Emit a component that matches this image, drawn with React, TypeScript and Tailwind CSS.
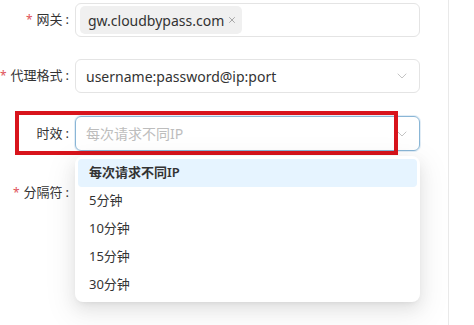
import { ChevronDown, X } from 'lucide-react';

const font = { fontFamily: '"Noto Sans", "Noto Sans CJK SC", sans-serif' };

function Label({ text, required }: { text: string; required?: boolean }) {
  return (
    <div className="flex w-[75px] shrink-0 items-center justify-end whitespace-nowrap pr-[6px] text-[13px] text-[#333]">
      {required && <span className="mr-[4px] text-[12px] text-[#e0525a]">*</span>}
      <span>{text}</span>
      <span className="ml-[3px]">:</span>
    </div>
  );
}

function Arrow() {
  return <ChevronDown className="h-[16px] w-[16px] text-[#c4c4c4]" strokeWidth={1.5} />;
}

const options = ['每次请求不同IP', '5分钟', '10分钟', '15分钟', '30分钟'];

export default function App() {
  return (
    <div className="flex h-[325px] w-[474px] overflow-hidden bg-white" style={font}>
      <div className="relative w-[449px] shrink-0 border-r border-[#e9e9e9] pt-[3px]">
        <div className="flex h-[34px] items-center">
          <Label text="网关" required />
          <div className="flex h-[34px] w-[345px] items-center rounded-[6px] border border-[#e4e4e4] px-[4px]">
            <span className="flex h-[28px] items-center gap-[3px] rounded-[5px] bg-[#f0f0f0] pl-[8px] pr-[5px] text-[14px] text-[#333]">
              gw.cloudbypass.com
              <X className="h-[10px] w-[10px] text-[#999]" strokeWidth={2} />
            </span>
          </div>
        </div>

        <div className="mt-[22px] flex h-[34px] items-center">
          <Label text="代理格式" required />
          <div className="flex h-[34px] w-[345px] items-center justify-between rounded-[6px] border border-[#e4e4e4] pl-[10px] pr-[9px] text-[14px] text-[#333]">
            <span>username:password@ip:port</span>
            <Arrow />
          </div>
        </div>

        <div className="mt-[23px] flex h-[35px] items-center">
          <Label text="时效" />
          <div className="flex h-[35px] w-[345px] items-center justify-between rounded-[6px] border border-[#8ab6d6] pl-[10px] pr-[9px] text-[14px] text-[#bdbdbd] shadow-[0_0_0_1px_rgba(140,185,220,0.25)]">
            <span>每次请求不同IP</span>
            <Arrow />
          </div>
        </div>

        <div className="mt-[25px] flex h-[34px] items-center">
          <Label text="分隔符" required />
        </div>

        <div className="pointer-events-none absolute left-[15px] top-[111px] h-[44px] w-[383px] border-[4px] border-[#d8141c]" />

        <div className="absolute left-[75px] top-[156px] w-[345px] rounded-[8px] bg-white p-[3px] shadow-[0_6px_16px_rgba(0,0,0,0.08),0_3px_6px_-4px_rgba(0,0,0,0.12),0_9px_28px_8px_rgba(0,0,0,0.05)]">
          {options.map((o, i) => (
            <div
              key={o}
              className={
                i === 0
                  ? 'flex h-[28px] items-center rounded-[4px] bg-[#e6f4ff] px-[11px] text-[13px] font-semibold text-[#333]'
                  : 'flex h-[28px] items-center px-[11px] text-[13px] text-[#333]'
              }
            >
              {o}
            </div>
          ))}
        </div>
      </div>
    </div>
  );
}
